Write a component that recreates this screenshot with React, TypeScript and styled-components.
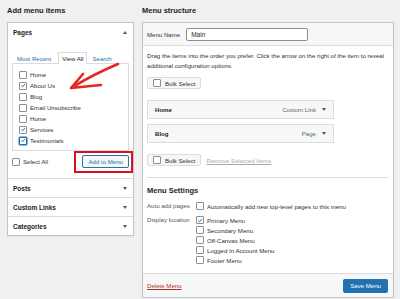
import React from 'react';
import styled, { createGlobalStyle } from 'styled-components';

const GlobalStyle = createGlobalStyle`
  html, body {
    margin: 0;
    padding: 0;
    background: #f0f0f1;
    font-family: "Liberation Sans", Arial, sans-serif;
    color: #1d2327;
  }
`;

const pageItems = [
  { label: 'Home', checked: false },
  { label: 'About Us', checked: true },
  { label: 'Blog', checked: false },
  { label: 'Email Unsubscribe', checked: false },
  { label: 'Home', checked: false },
  { label: 'Services', checked: true },
  { label: 'Testimonials', checked: true, focused: true },
];

const menuItems = [
  { title: 'Home', type: 'Custom Link' },
  { title: 'Blog', type: 'Page' },
];

const locations = [
  { label: 'Primary Menu', checked: true },
  { label: 'Secondary Menu', checked: false },
  { label: 'Off-Canvas Menu', checked: false },
  { label: 'Logged In Account Menu', checked: false },
  { label: 'Footer Menu', checked: false },
];

const Check: React.FC<{ checked?: boolean; focused?: boolean }> = ({ checked, focused }) => (
  <CheckBox $focused={focused}>
    {checked && (
      <svg width="7" height="7" viewBox="0 0 7 7">
        <path d="M1.4 3.6 L2.9 5.1 L5.8 1.6" fill="none" stroke="#2271b1" strokeWidth="1.1" />
      </svg>
    )}
  </CheckBox>
);

const Caret: React.FC<{ up?: boolean }> = ({ up }) => (
  <svg width="4" height="3" viewBox="0 0 4 3">
    <path d={up ? 'M0 3 L2 0 L4 3 Z' : 'M0 0 L4 0 L2 3 Z'} fill="#50575e" />
  </svg>
);

const App: React.FC = () => {
  return (
    <>
      <GlobalStyle />
      <Page>
        <LeftCol>
          <Heading>Add menu items</Heading>
          <Panel>
            <PagesSection>
              <SectionHeader $open>
                <span>Pages</span>
                <Caret up />
              </SectionHeader>
              <TabsArea>
                <Tabs>
                  <Tab>Most Recent</Tab>
                  <Tab $active>View All</Tab>
                  <Tab>Search</Tab>
                </Tabs>
                <ListBox>
                  {pageItems.map((item, i) => (
                    <Row key={i}>
                      <Check checked={item.checked} focused={item.focused} />
                      <span>{item.label}</span>
                    </Row>
                  ))}
                </ListBox>
                <ActionRow>
                  <Row>
                    <Check />
                    <span>Select All</span>
                  </Row>
                  <Highlight>
                    <OutlineButton>Add to Menu</OutlineButton>
                  </Highlight>
                </ActionRow>
              </TabsArea>
              <Annotation width="56" height="34" viewBox="0 0 56 34">
                <path
                  d="M3 29 Q26 15 50 5 M3 29 L15 15 M3 29 L33 26"
                  fill="none"
                  stroke="#e5281f"
                  strokeWidth="2.6"
                  strokeLinecap="round"
                  strokeLinejoin="round"
                />
              </Annotation>
            </PagesSection>
            {['Posts', 'Custom Links', 'Categories'].map((s) => (
              <SectionHeader key={s}>
                <span>{s}</span>
                <Caret />
              </SectionHeader>
            ))}
          </Panel>
        </LeftCol>

        <RightCol>
          <Heading>Menu structure</Heading>
          <Panel>
            <NameBar>
              <Label>Menu Name</Label>
              <NameInput value="Main" readOnly />
            </NameBar>
            <Body>
              <Hint>
                Drag the items into the order you prefer. Click the arrow on the right of the item to reveal
                additional configuration options.
              </Hint>
              <BulkRow>
                <BulkButton>
                  <Check />
                  <span>Bulk Select</span>
                </BulkButton>
              </BulkRow>
              <Items>
                {menuItems.map((m) => (
                  <MenuItem key={m.title}>
                    <strong>{m.title}</strong>
                    <ItemMeta>
                      <span>{m.type}</span>
                      <Caret />
                    </ItemMeta>
                  </MenuItem>
                ))}
              </Items>
              <BulkRow $spaced>
                <BulkButton>
                  <Check />
                  <span>Bulk Select</span>
                </BulkButton>
                <DisabledLink>Remove Selected Items</DisabledLink>
              </BulkRow>
              <Divider />
              <SubHeading>Menu Settings</SubHeading>
              <SettingGroup>
                <SettingLabel>Auto add pages</SettingLabel>
                <SettingOptions>
                  <OptionRow>
                    <Check />
                    <span>Automatically add new top-level pages to this menu</span>
                  </OptionRow>
                </SettingOptions>
              </SettingGroup>
              <SettingGroup $gap>
                <SettingLabel>Display location</SettingLabel>
                <SettingOptions>
                  {locations.map((l) => (
                    <OptionRow key={l.label}>
                      <Check checked={l.checked} />
                      <span>{l.label}</span>
                    </OptionRow>
                  ))}
                </SettingOptions>
              </SettingGroup>
            </Body>
            <FooterBar>
              <DeleteLink>Delete Menu</DeleteLink>
              <PrimaryButton>Save Menu</PrimaryButton>
            </FooterBar>
          </Panel>
        </RightCol>
      </Page>
    </>
  );
};

const Page = styled.div`
  display: flex;
  align-items: flex-start;
  gap: 8px;
  padding: 5px 6px 0 7px;
`;

const LeftCol = styled.div`
  width: 127px;
  flex-shrink: 0;
`;

const RightCol = styled.div`
  width: 252px;
  flex-shrink: 0;
`;

const Heading = styled.h2`
  margin: 0 0 6px;
  font-size: 7.5px;
  line-height: 11px;
  font-weight: 700;
  color: #1d2327;
`;

const Panel = styled.div`
  background: #fff;
  border: 1px solid #c3c4c7;
  box-shadow: 0 1px 1px rgba(0, 0, 0, 0.04);
`;

const PagesSection = styled.div`
  position: relative;
`;

const SectionHeader = styled.div<{ $open?: boolean }>`
  display: flex;
  justify-content: space-between;
  align-items: center;
  height: 18px;
  padding: 0 6px 0 5px;
  font-size: 6.5px;
  font-weight: 700;
  color: #1d2327;
  border-top: ${(p) => (p.$open ? 'none' : '1px solid #dcdcde')};
`;

const TabsArea = styled.div`
  padding: 11px 4px 10px 4px;
`;

const Tabs = styled.div`
  display: flex;
  gap: 1px;
  padding-left: 1px;
  position: relative;
  z-index: 1;
`;

const Tab = styled.div<{ $active?: boolean }>`
  padding: 0 3px;
  height: 11px;
  line-height: 11px;
  font-size: 6.1px;
  color: ${(p) => (p.$active ? '#1d2327' : '#2271b1')};
  background: ${(p) => (p.$active ? '#fff' : 'transparent')};
  border: 1px solid ${(p) => (p.$active ? '#dcdcde' : 'transparent')};
  border-bottom: none;
  margin-bottom: -1px;
  margin-left: ${(p) => (p.$active ? '2px' : '0')};
`;

const ListBox = styled.div`
  border: 1px solid #dcdcde;
  padding: 5px 6px 4px;
`;

const Row = styled.div`
  display: flex;
  align-items: center;
  gap: 3px;
  height: 11px;
  font-size: 6.1px;
  color: #2c3338;
`;

const CheckBox = styled.span<{ $focused?: boolean }>`
  display: inline-flex;
  align-items: center;
  justify-content: center;
  width: 6px;
  height: 6px;
  border: 1px solid ${(p) => (p.$focused ? '#2271b1' : '#8c8f94')};
  box-shadow: ${(p) => (p.$focused ? '0 0 0 0.5px #2271b1' : 'none')};
  border-radius: 1px;
  background: #fff;
  flex-shrink: 0;
`;

const ActionRow = styled.div`
  display: flex;
  justify-content: space-between;
  align-items: center;
  margin-top: 4px;
`;

const Highlight = styled.div`
  position: relative;
  &::after {
    content: '';
    position: absolute;
    left: -8px;
    right: -4px;
    top: -4px;
    bottom: -5px;
    border: 2px solid #d9111c;
    pointer-events: none;
  }
`;

const OutlineButton = styled.div`
  height: 11px;
  line-height: 11px;
  padding: 0 5px;
  font-size: 6.1px;
  color: #2271b1;
  background: #f6f7f7;
  border: 1px solid #2271b1;
  border-radius: 2px;
`;

const Annotation = styled.svg`
  position: absolute;
  left: 60px;
  top: 36px;
  overflow: visible;
`;

const NameBar = styled.div`
  display: flex;
  align-items: center;
  gap: 6px;
  height: 22px;
  padding: 0 4px;
  background: #f6f7f7;
  border-bottom: 1px solid #dcdcde;
`;

const Label = styled.span`
  font-size: 6.1px;
  color: #2c3338;
`;

const NameInput = styled.input`
  width: 122px;
  height: 13px;
  box-sizing: border-box;
  padding: 0 4px;
  font-family: inherit;
  font-size: 6.5px;
  color: #1d2327;
  border: 1px solid #8c8f94;
  border-radius: 2px;
  background: #fff;
  outline: none;
`;

const Body = styled.div`
  padding: 5px 5px 8px 4px;
`;

const Hint = styled.p`
  margin: 0 -4px 0 0;
  font-size: 6.1px;
  line-height: 10px;
  color: #2c3338;
`;

const BulkRow = styled.div<{ $spaced?: boolean }>`
  display: flex;
  align-items: center;
  gap: 5px;
  margin-top: ${(p) => (p.$spaced ? '11px' : '6px')};
`;

const BulkButton = styled.div`
  display: flex;
  align-items: center;
  gap: 4px;
  height: 10px;
  padding: 0 5px;
  font-size: 6.1px;
  color: #2c3338;
  background: #f6f7f7;
  border: 1px solid #dcdcde;
  border-radius: 2px;
`;

const DisabledLink = styled.span`
  font-size: 6.1px;
  color: #a7aaad;
  text-decoration: underline;
`;

const Items = styled.div`
  display: flex;
  flex-direction: column;
  gap: 5px;
  margin-top: 11px;
  width: 187px;
`;

const MenuItem = styled.div`
  display: flex;
  justify-content: space-between;
  align-items: center;
  height: 17px;
  padding: 0 7px;
  font-size: 6.1px;
  color: #1d2327;
  background: #f6f7f7;
  border: 1px solid #dcdcde;
`;

const ItemMeta = styled.span`
  display: flex;
  align-items: center;
  gap: 6px;
  color: #646970;
`;

const Divider = styled.div`
  margin-top: 11px;
  border-top: 1px solid #dcdcde;
`;

const SubHeading = styled.h3`
  margin: 8px 0 0;
  font-size: 7.5px;
  line-height: 10px;
  font-weight: 700;
  color: #1d2327;
`;

const SettingGroup = styled.div<{ $gap?: boolean }>`
  display: flex;
  margin-top: ${(p) => (p.$gap ? '4px' : '5px')};
`;

const SettingLabel = styled.div`
  width: 49px;
  font-size: 6.1px;
  line-height: 10px;
  color: #50575e;
`;

const SettingOptions = styled.div`
  display: flex;
  flex-direction: column;
`;

const OptionRow = styled.div`
  display: flex;
  align-items: center;
  gap: 3px;
  height: 10px;
  font-size: 6.1px;
  color: #2c3338;
`;

const FooterBar = styled.div`
  display: flex;
  justify-content: space-between;
  align-items: center;
  height: 23px;
  padding: 0 5px 0 4px;
  background: #f6f7f7;
  border-top: 1px solid #dcdcde;
`;

const DeleteLink = styled.span`
  font-size: 6.1px;
  color: #b32d2e;
  text-decoration: underline;
`;

const PrimaryButton = styled.div`
  height: 14px;
  line-height: 14px;
  padding: 0 7px;
  font-size: 6.1px;
  color: #fff;
  background: #2271b1;
  border-radius: 2px;
`;

export default App;
